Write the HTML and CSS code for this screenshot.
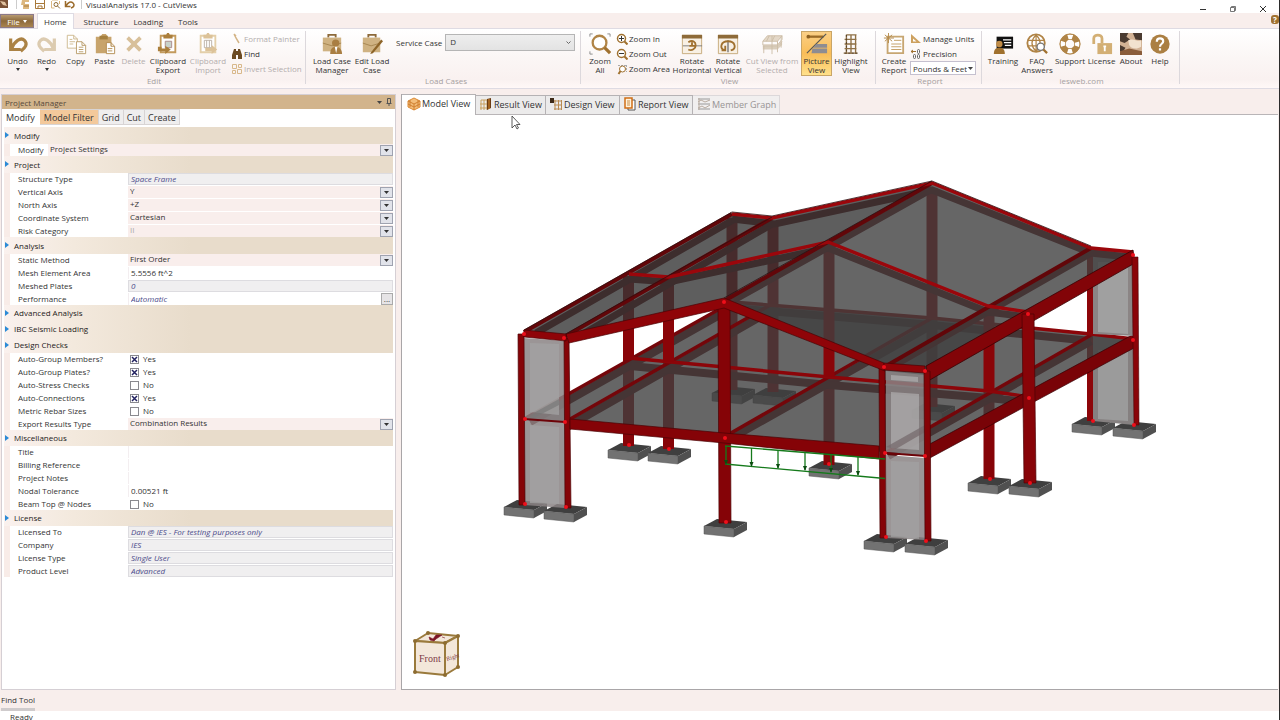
FILE: index.html
```html
<!DOCTYPE html>
<html lang="en">
<head>
<meta charset="utf-8">
<title>VisualAnalysis 17.0 - CutViews</title>
<link rel="stylesheet" href="styles.css">
</head>
<body>
<div class="app">
<header class="titlebar">
  <svg class="quick" viewBox="0 0 76 10" aria-hidden="true">
    <path d="M0 0h8v8H0z" fill="#7a5136"/><path d="M0 1l5 1 2 4-4-1z" fill="#e0c2a0"/><path d="M16.500 0v9" stroke="#ccc"/>
    <path d="M22 0h7v2h-4v2h4v5h-6V5h-2z" fill="#dcb77f"/><path d="M24 6h5" stroke="#a8793a"/>
    <path d="M35.500 0v8.500h9V0M35 3.500h9M38 8V6h4v2" stroke="#a8793a" fill="none"/>
    <path d="M52 0h6M51.500 1v7h3M59.500 1v3" stroke="#dcb77f" fill="none"/><circle cx="56" cy="4.500" r="2" stroke="#8f6a33" fill="none"/><path d="M57.500 6l2.500 2.500" stroke="#8f6a33"/>
    <path d="M65.500 1v5.500h5M66 6c2-4 5-5 7-3s1 4-2 5" stroke="#9a6a2a" stroke-width="1.500" fill="none"/>
  </svg>
  <span class="title">VisualAnalysis 17.0 - CutViews</span>
  <div class="winbtns">
    <button aria-label="Minimize"><svg viewBox="0 0 8 8"><path d="M1 4.500h6" stroke="#333"/></svg></button>
    <button aria-label="Restore"><svg viewBox="0 0 8 8"><path d="M1.500 2.500h4v4h-4zM2.500 2.500v-1h4v4h-1" stroke="#555" stroke-width=".8" fill="none"/></svg></button>
    <button aria-label="Close"><svg viewBox="0 0 8 8"><path d="M1 1l6 6M7 1L1 7" stroke="#333"/></svg></button>
  </div>
</header>

<nav class="menu">
  <button class="file">File <span class="tri"></span></button>
  <button class="mtab on">Home</button>
  <button class="mtab">Structure</button>
  <button class="mtab">Loading</button>
  <button class="mtab">Tools</button>
  <button class="minihelp" aria-label="Help">?</button>
</nav>

<section class="ribbon">
  <div class="group g-edit">
    <div class="tools">
      <button class="big w29"><svg viewBox="0 0 24 24"><path d="M4 6v12h11M5 17C8 9 15 4 19 8s1 8-4 12" fill="none" stroke="#ab8244" stroke-width="3.500"/></svg><span>Undo</span><i class="tri"></i></button>
      <button class="big w29"><svg viewBox="0 0 24 24"><path d="M20 6v12H9M19 17C16 9 9 4 5 8s-1 8 4 12" fill="none" stroke="#dccbb0" stroke-width="3.500"/></svg><span>Redo</span><i class="tri"></i></button>
      <button class="big w29"><svg viewBox="0 0 24 24"><path d="M2.500 2.500h7l4 4v10h-11zM9.500 2.500v4h4M5 7h3M5 9.500h6M5 12h4" fill="#fff" stroke="#cdb88c"/><path d="M12.500 9.500h6l4 4v9h-10zM18.500 9.500v4h4M15 15.500h5M15 18h5M15 20.500h5" fill="#fff" stroke="#b89a68"/></svg><span>Copy</span></button>
      <button class="big w29"><svg viewBox="0 0 24 24"><path d="M2 4h5l2-3h4l2 3h4v18H2z" fill="#c8a46c"/><path d="M6 3h9v4H6z" fill="#a5803f"/><path d="M13.500 10.500h5l4 4v8h-9zM18.500 10.500v4h4M15 17h5M15 19.500h5" fill="#fff" stroke="#b28b50"/></svg><span>Paste</span></button>
      <button class="big w29" disabled><svg viewBox="0 0 24 24"><path d="M5 5l14 14M19 5L5 19" stroke="#d8c09a" stroke-width="4"/></svg><span>Delete</span></button>
      <button class="big w40"><svg viewBox="0 0 24 24"><path d="M4 3h16v18H4z" fill="#fff" stroke="#c39a5c" stroke-width="2"/><path d="M7 2h3l1-2h2l1 2h3v4H7z" fill="#ab7f3c"/><path d="M9 9h7v7H9z" fill="#c8d2ca" stroke="#a88"/><path d="M1 15v5h8v3l6-5-6-4v3H5v-2z" fill="#ab7f3c"/></svg><span>Clipboard<br>Export</span></button>
      <button class="big w40" disabled><svg viewBox="0 0 24 24"><path d="M4 3h16v18H4z" fill="#fff" stroke="#e4cfa9" stroke-width="2"/><path d="M7 2h3l1-2h2l1 2h3v4H7z" fill="#dcc298"/><path d="M8 8h8v8H8zM10.500 8v8M13.500 8v8" fill="none" stroke="#b9afa5"/><path d="M9 16h7v-3l6 5-6 5v-3H9z" fill="#dcc298"/></svg><span>Clipboard<br>Import</span></button>
      <div class="stack s-edit">
        <button class="small" disabled><svg viewBox="0 0 12 12"><path d="M3 1l2 4 3 5M3 1l2 2" stroke="#d3b486" fill="none" stroke-width="1.500"/></svg>Format Painter</button>
        <button class="small"><svg viewBox="0 0 12 12"><path d="M3 1h2v2h2V1h2l2 6v4H7V7H5v4H1V7z" fill="#6b4a22"/></svg>Find</button>
        <button class="small" disabled><svg viewBox="0 0 12 12"><path d="M1.500 1.500h4v4h-4zM6.500 6.500h4v4h-4zM7.500 1.500h3v3h-3zM1.500 7.500h3v3h-3z" stroke="#d8b88a" fill="none"/></svg>Invert Selection</button>
      </div>
    </div>
    <div class="gname">Edit</div>
  </div>

  <div class="group g-load">
    <div class="tools">
      <button class="big w40"><svg viewBox="0 0 24 24"><path d="M8 5V2h8v3" fill="none" stroke="#8d6a3a" stroke-width="2"/><path d="M2 5h20v15H2z" fill="#cfb282"/><path d="M2 11l10 3 10-3" stroke="#a58450" fill="none"/><circle cx="16" cy="11" r="4" fill="#a97e42"/><path d="M10 23c0-5 2-8 6-8s7 3 7 8z" fill="#a97e42"/><path d="M15 15h3l-1.500 7z" fill="#fff"/></svg><span>Load Case<br>Manager</span></button>
      <button class="big w40"><svg viewBox="0 0 24 24"><path d="M8 5V2h8v3" fill="none" stroke="#8d6a3a" stroke-width="2"/><path d="M2 5h19v16H2z" fill="#cfb282"/><path d="M2 11l9 3 10-3" stroke="#a58450" fill="none"/><path d="M11 21l-1 2 3-1L24 9l-2-2z" fill="#8d6428"/></svg><span>Edit Load<br>Case</span></button>
      <div class="case"><label for="svc">Service Case</label>
      <select id="svc"><option>D</option></select></div>
    </div>
    <div class="gname">Load Cases</div>
  </div>

  <div class="group g-view">
    <div class="tools">
      <button class="big w32"><svg viewBox="0 0 24 24"><path d="M1 4V1h3M20 1h3v3M1 20v3h3" fill="none" stroke="#888"/><circle cx="11.500" cy="10.500" r="7.500" fill="#fff" stroke="#b08446" stroke-width="2.500"/><path d="M17 16l6 6" stroke="#a0712f" stroke-width="3.500"/></svg><span>Zoom<br>All</span></button>
      <div class="stack s-zoom">
        <button class="small"><svg viewBox="0 0 12 12"><circle cx="5.500" cy="5.500" r="4" fill="#fff" stroke="#a0712f" stroke-width="1.500"/><path d="M3 5.500h5M5.500 3v5" stroke="#333"/><path d="M8.500 8.500l3 3" stroke="#a0712f" stroke-width="2"/></svg>Zoom In</button>
        <button class="small"><svg viewBox="0 0 12 12"><circle cx="5.500" cy="5.500" r="4" fill="#fff" stroke="#a0712f" stroke-width="1.500"/><path d="M3 5.500h5" stroke="#333"/><path d="M8.500 8.500l3 3" stroke="#a0712f" stroke-width="2"/></svg>Zoom Out</button>
        <button class="small"><svg viewBox="0 0 12 12"><path d="M2 2.500h9M10.500 2v7" stroke="#aaa" stroke-dasharray="2 1"/><circle cx="6.500" cy="6" r="3" fill="#fff" stroke="#a0712f"/><path d="M4.500 8l-2 3" stroke="#a0712f" stroke-width="2"/></svg>Zoom Area</button>
      </div>
      <button class="big w42"><svg viewBox="0 0 24 24"><path d="M1.500 2.500h21v20h-21z" fill="#f8f0e4" stroke="#c5a878"/><path d="M1 2h22v4H1z" fill="#8d6a38"/><path d="M2 14h7M15 14h8" stroke="#777"/><path d="M8 10c5-3 8 0 8 3.500S12 20 8 18M9 14h6M12 10v3" fill="none" stroke="#a0712f" stroke-width="2"/></svg><span>Rotate<br>Horizontal</span></button>
      <button class="big w30"><svg viewBox="0 0 24 24"><path d="M1.500 2.500h21v20h-21z" fill="#f8f0e4" stroke="#c5a878"/><path d="M1 2h22v4H1z" fill="#8d6a38"/><path d="M12 8v13" stroke="#777" stroke-width="1.500"/><path d="M9 19c-7-2-5-10 3-10s10 8 3 10M9 14v5H5" fill="none" stroke="#a0712f" stroke-width="2"/></svg><span>Rotate<br>Vertical</span></button>
      <button class="big w58" disabled><svg viewBox="0 0 24 24"><path d="M2 9l5-6h16l-5 6z" fill="#e4d8c8"/><path d="M2 14h16l5-5v4l-5 5H2z" fill="#d9cdbb"/><path d="M2 9l5-6h16l-5 6zM2 9v4h16V9M18 13l5-6V3M2 14h16l5-5M12 3v20M18 9v12M3 14v8M9 3l-3 6M15 3l-3 6M22 4v12" fill="none" stroke="#cdbda6"/></svg><span>Cut View from<br>Selected</span></button>
      <button class="big w31 active"><svg viewBox="0 0 24 24"><path d="M2 4h17" stroke="#9a6a26" stroke-width="2.500"/><circle cx="2.500" cy="4" r="2" fill="#8d6020"/><path d="M1 22L22 1" stroke="#555" stroke-width="1.200"/><path d="M11 12h12v4H8zM7 17h16v5H6z" fill="#8e8c92"/></svg><span>Picture<br>View</span></button>
      <button class="big w38"><svg viewBox="0 0 24 24"><path d="M7 2v21M12 2v21M17 2v21M5 7h13M5 12h13M5 17h13M4 22h15M7 2h11" fill="none" stroke="#8f7146" stroke-width="1.500"/><path d="M5 22h14M7 2v20" stroke="#4b3a26" stroke-dasharray="2 2"/></svg><span>Highlight<br>View</span></button>
    </div>
    <div class="gname">View</div>
  </div>

  <div class="group g-report">
    <div class="tools">
      <button class="big w30"><svg viewBox="0 0 24 24"><path d="M5 4h17v18H5z" fill="#fff" stroke="#c7a671" stroke-width="2"/><path d="M12 8h8M9 12h11M9 15h11M9 18h11" stroke="#c09a5e"/><path d="M6 0v11M1 5.500h11M2 2l8 7M10 2L2 9" stroke="#b58b4b"/></svg><span>Create<br>Report</span></button>
      <div class="stack s-report">
        <button class="small"><svg viewBox="0 0 12 12"><path d="M1 1v9h10zM3 5.500L6.500 8.500H3z" fill="#cda15f" fill-rule="evenodd"/></svg>Manage Units</button>
        <button class="small"><svg viewBox="0 0 12 12"><path d="M1 3.500h5M3 2L1 3.500 3 5" stroke="#a0712f" fill="none"/><rect x="7.500" y="1.500" width="2" height="4" rx="1" fill="none" stroke="#666"/><rect x="3.500" y="6.500" width="2" height="4" rx="1" fill="none" stroke="#666"/><rect x="7.500" y="6.500" width="2" height="4" rx="1" fill="none" stroke="#666"/></svg>Precision</button>
        <select class="units" aria-label="Units"><option>Pounds &amp; Feet</option></select>
      </div>
    </div>
    <div class="gname">Report</div>
  </div>

  <div class="group g-web">
    <div class="tools">
      <button class="big w38"><svg viewBox="0 0 24 24"><path d="M5 4h18v13H5z" fill="#111"/><path d="M12 7.500h9M13 10.500h8M14 13.500h7" stroke="#fff" stroke-width="1.500"/><circle cx="8" cy="12" r="3.500" fill="#c08c48"/><path d="M2 23c0-5 2-7 6-7s6 2 6 7z" fill="#a0712f"/></svg><span>Training</span></button>
      <button class="big w30"><svg viewBox="0 0 24 24"><circle cx="11" cy="11" r="9.500" fill="#fff" stroke="#b08446" stroke-width="2"/><path d="M2 8h18M2 14h18M11 2c-6 6-6 12 0 18M11 2c6 6 6 12 0 18M11 2v18" fill="none" stroke="#b08446" stroke-width="1.300"/><circle cx="16" cy="15" r="4" fill="#fff" stroke="#777" stroke-width="1.500"/><path d="M19 18l4 4" stroke="#a0712f" stroke-width="2.500"/></svg><span>FAQ<br>Answers</span></button>
      <button class="big w36"><svg viewBox="0 0 24 24"><circle cx="12" cy="12" r="8" fill="none" stroke="#b08446" stroke-width="6.500"/><circle cx="12" cy="12" r="8" fill="none" stroke="#fff" stroke-width="5" stroke-dasharray="5 7.560" stroke-dashoffset="2.500"/><circle cx="12" cy="12" r="11" fill="none" stroke="#b08446"/></svg><span>Support</span></button>
      <button class="big w27"><svg viewBox="0 0 24 24"><path d="M3 12V6c0-5 9-5 9 0v5" fill="none" stroke="#d3af74" stroke-width="3"/><path d="M7 11h16v12H7z" fill="#d3af74"/><path d="M15 14v6M13.500 14.500h3" stroke="#fff" stroke-width="2"/></svg><span>License</span></button>
      <button class="big w32"><svg viewBox="0 0 24 24"><path d="M0 0h24v24H0z" fill="#d2b295"/><path d="M0 0h9l-2 4 4 3-6 4-5-2zM14 0h10v8l-7-1zM0 13l6 3-3 5-3-1z" fill="#4a3a30"/><path d="M9 8c5-3 11 2 14 0v7c-6 4-12 1-13-2z" fill="#f2e2cf"/><path d="M0 20l10-3 14 3v4H0z" fill="#8a5c3a"/></svg><span>About</span></button>
      <button class="big w26"><svg viewBox="0 0 24 24"><circle cx="12" cy="12" r="10.500" fill="#ab7f42"/><path d="M8.500 9.500c0-5 7-4.500 7-.5 0 3-3.500 2.500-3.500 6M12 16.500v2.500" fill="none" stroke="#fff" stroke-width="2.400"/></svg><span>Help</span></button>
    </div>
    <div class="gname">iesweb.com</div>
  </div>
</section>

<main class="work">
<aside class="manager">
  <div class="mhead"><span>Project Manager</span><svg viewBox="0 0 18 8"><path d="M2 3h5L4.500 6z" fill="#444"/><path d="M11.500 5.500h5M12.500 5V.500h3V5M14 5.500V8" stroke="#555" fill="none"/></svg></div>
  <div class="mtabs" role="tablist">
    <button role="tab" class="pt on">Modify</button><button role="tab" class="pt filter">Model Filter</button><button role="tab" class="pt">Grid</button><button role="tab" class="pt">Cut</button><button role="tab" class="pt">Create</button>
  </div>
  <div class="props">
    <h3>Modify</h3>
    <div class="rows">
      <div class="row short"><label for="p1">Modify</label><select id="p1"><option>Project Settings</option></select></div>
    </div>
    <h3>Project</h3>
    <div class="rows">
      <div class="row"><label for="p2">Structure Type</label><input id="p2" class="ro" readonly value="Space Frame"></div>
      <div class="row"><label for="p3">Vertical Axis</label><select id="p3"><option>Y</option></select></div>
      <div class="row"><label for="p4">North Axis</label><select id="p4"><option>+Z</option></select></div>
      <div class="row"><label for="p5">Coordinate System</label><select id="p5"><option>Cartesian</option></select></div>
      <div class="row"><label for="p6">Risk Category</label><select id="p6" class="dim"><option>II</option></select></div>
    </div>
    <h3>Analysis</h3>
    <div class="rows">
      <div class="row"><label for="p7">Static Method</label><select id="p7"><option>First Order</option></select></div>
      <div class="row"><label for="p8">Mesh Element Area</label><input id="p8" value="5.5556 ft^2"></div>
      <div class="row"><label for="p9">Meshed Plates</label><input id="p9" class="ro" readonly value="0"></div>
      <div class="row"><label for="p10">Performance</label><input id="p10" class="auto" value="Automatic"><button class="dots" aria-label="Edit performance">...</button></div>
    </div>
    <h3 class="tight">Advanced Analysis</h3>
    <h3 class="tight">IBC Seismic Loading</h3>
    <h3 class="tight">Design Checks</h3>
    <div class="rows">
      <div class="row"><label for="c1">Auto-Group Members?</label><input id="c1" type="checkbox" checked><span>Yes</span></div>
      <div class="row"><label for="c2">Auto-Group Plates?</label><input id="c2" type="checkbox" checked><span>Yes</span></div>
      <div class="row"><label for="c3">Auto-Stress Checks</label><input id="c3" type="checkbox"><span>No</span></div>
      <div class="row"><label for="c4">Auto-Connections</label><input id="c4" type="checkbox" checked><span>Yes</span></div>
      <div class="row"><label for="c5">Metric Rebar Sizes</label><input id="c5" type="checkbox"><span>No</span></div>
      <div class="row"><label for="p11">Export Results Type</label><select id="p11"><option>Combination Results</option></select></div>
    </div>
    <h3 class="tight">Miscellaneous</h3>
    <div class="rows">
      <div class="row"><label for="p12">Title</label><input id="p12"></div>
      <div class="row"><label for="p13">Billing Reference</label><input id="p13"></div>
      <div class="row"><label for="p14">Project Notes</label><input id="p14"></div>
      <div class="row"><label for="p15">Nodal Tolerance</label><input id="p15" value="0.00521 ft"></div>
      <div class="row"><label for="c6">Beam Top @ Nodes</label><input id="c6" type="checkbox"><span>No</span></div>
    </div>
    <h3 class="tight">License</h3>
    <div class="rows">
      <div class="row"><label for="p16">Licensed To</label><input id="p16" class="ro" readonly value="Dan @ IES - For testing purposes only"></div>
      <div class="row"><label for="p17">Company</label><input id="p17" class="ro" readonly value="IES"></div>
      <div class="row"><label for="p18">License Type</label><input id="p18" class="ro" readonly value="Single User"></div>
      <div class="row"><label for="p19">Product Level</label><input id="p19" class="ro" readonly value="Advanced"></div>
    </div>
  </div>
</aside>

<section class="views">
  <div class="vtabs" role="tablist">
    <button role="tab" class="vt v1 on"><svg viewBox="0 0 14 14"><path d="M7 1l6 3v6l-6 3-6-3V4z" fill="#f3bd7a" stroke="#dc8a34"/><path d="M1 4l6 3 6-3M7 7v6M3 3v7M11 3v7M1 7l6 3 6-3" stroke="#d08030" fill="none"/></svg>Model View</button>
    <button role="tab" class="vt v2"><svg viewBox="0 0 14 14"><path d="M2 3h6v10M2 3v10M5 3v10M1 7h8M1 11h8" stroke="#c9a061" fill="none"/><path d="M8 2l4-1v10l-4 2z" fill="#6b3c14"/><path d="M10 2v10" stroke="#e08b2b"/></svg>Result View</button>
    <button role="tab" class="vt v3"><svg viewBox="0 0 14 14"><path d="M5 4h8M5 8h8M5 12h8M6 3v10M9.500 3v10M12.500 3v10" stroke="#b98a50" fill="none"/><path d="M1 1h4v5H1z" fill="#3d2a18"/></svg>Design View</button>
    <button role="tab" class="vt v4"><svg viewBox="0 0 14 14"><path d="M5 3h7v10H5z" fill="#fff" stroke="#555"/><path d="M2 1h7v10H2z" fill="#fff3dc" stroke="#cf6d16" stroke-width="1.500"/><path d="M4 4h3M4 6h3M4 8h3" stroke="#c98b45"/></svg>Report View</button>
    <button role="tab" class="vt v5" disabled><svg viewBox="0 0 14 14"><path d="M1 2h12M1 7h12M1 12h12" stroke="#999"/><path d="M1 5l3-2 4 2 5-2M1 11l4-2 3 2 5-3M2 1v12" stroke="#b9aca0" fill="none"/></svg>Member Graph</button>
  </div>
  <svg class="model" viewBox="402 115 876 574" preserveAspectRatio="xMidYMid meet" role="img" aria-label="Steel frame model">
    <defs>
      <g id="pad"><path d="M-20 3L-7 -4L23 -1L10 6Z" fill="#3f3f3f"/><path d="M-20 3L10 6V14L-20 11Z" fill="#727272" stroke="#555" stroke-width=".5"/><path d="M10 6L23 -1V7L10 14Z" fill="#505050"/></g>
      <circle id="nd" r="2" fill="#ee0f1a"/>
      <g id="arr"><path d="M0 0V18" stroke="#157a1b" stroke-width="1.300"/><path d="M-2 14h4l-2 5z" fill="#0b4d10"/></g>
    </defs>

    <!-- pads -->
    <use href="#pad" x="732" y="390"/><use href="#pad" x="773" y="392"/><use href="#pad" x="932" y="407"/>
    <use href="#pad" x="1092" y="421"/><use href="#pad" x="1133" y="425"/>
    <use href="#pad" x="628" y="447"/><use href="#pad" x="668" y="450"/><use href="#pad" x="829" y="465"/><use href="#pad" x="988" y="480"/><use href="#pad" x="1029" y="483"/>

    <!-- lower columns behind the floor -->
    <g stroke="#860408" stroke-width="11">
      <path d="M732 302V390M773 304V392M932 318V407M628.500 358V446M668.500 362V449M829 377V465M989 391V479"/>
    </g>
    <path d="M1093 334L1134 340V425L1093 421Z" fill="#858080"/><path d="M1098 350L1128 350V421L1098 419Z" fill="#9b9b9b"/>
    <path d="M1087 334H1093V421H1087Z" fill="#8d0509"/>
    <g stroke="#5a0a0d" stroke-width="8" fill="none">
      <path d="M530 422L732 308M567 427L774 309M728 440L932 325M888 456L1091 341"/>
      <path d="M732 308L932 325L1091 341M630 366L829 385L989 398L1026 402"/>
    </g>
    <path class="glass" d="M524 419L732 302L932 318L1091 334L1134 340L925 456L724 437Z"/>
    <g stroke="#74060a" stroke-width="3.500" fill="none">
      <path d="M524 419L732 302M565 422L772 304M724 437L932 318M885 453L1091 335"/>
      <path d="M732 302L932 318L1091 334L1134 339M629 358L829 377L989 391L1029 397" stroke="#8c0509"/>
    </g>
    <path d="M928 445L1134 334V348L928 459Z" fill="#790307" stroke="#370204" stroke-width=".7"/>

    <!-- upper columns under the roof -->
    <g stroke="#8a0408" stroke-width="11">
      <path d="M732 218V302M773 222V304M932 188V318M628.500 276V360M668.500 279V362M829 246V377M989 308V391"/>
    </g>
    <path d="M1093 247L1134 256V336L1093 334Z" fill="#8b8585"/><path d="M1098 262L1128 262V334L1098 332Z" fill="#a0a0a0"/>
    <path d="M1087 250H1093V334H1087Z" fill="#8d0509"/>
    <path d="M886 371L925 375V455L886 452Z" class="wall"/>

    <!-- roof framing seen through the panels -->
    <g stroke="#5a0a0d" stroke-width="7" fill="none">
      <path d="M536 333L733 220M576 338L774 223M734 300L932 189M893 366L1093 252"/>
      <path d="M732 219L775 224L932 190L1091 253L1128 257M629 279L669 282L828 248L988 312L1027 317"/>
    </g>
    <path class="glass left" d="M524 332L732 213L772 218L932 182L724 300L564 337Z"/>
    <path class="glass" d="M724 300L932 182L1091 247L1133 252L925 369L885 365Z"/>
    <g stroke="#620609" stroke-width="4" fill="none">
      <path d="M524 332L732 214M564 337L772 218M724 301L932 183M886 366L1091 248"/>
    </g>
    <g stroke="#9b060b" stroke-width="3.500" fill="none">
      <path d="M732 214L772 218L932 183L1091 248L1133 252M629 274L669 277L828 242L988 306L1028 312"/>
    </g>
    <g stroke="#2d1012" stroke-width=".8" fill="none"><path d="M524 330L732 212L772 216L932 181L1091 246M564 335L772 217M724 298L932 181"/></g>
    <path d="M926 366L1133 250L1135 263L928 381Z" fill="#820408" stroke="#390204" stroke-width=".8"/>

    <!-- right side columns -->
    <path d="M1132 257H1138L1139 425H1134Z" fill="#8a0408" stroke="#4a0305" stroke-width=".6"/>
    <path d="M1022 314H1034L1036 483H1024Z" fill="#880408" stroke="#4a0305" stroke-width=".7"/>

    <!-- front pads, walls and columns -->
    <use href="#pad" x="524" y="504"/><use href="#pad" x="564" y="508"/><use href="#pad" x="724" y="523"/><use href="#pad" x="884" y="538"/><use href="#pad" x="925" y="541"/>
    <path class="wall" d="M524 338L565 341V508L524 505Z"/>
    <path d="M530 343L559 344V415L530 412ZM530 425L559 427V504L530 503Z" fill="#a3a3a3" opacity=".75"/>
    <path d="M530 415L559 399V405L530 420Z" fill="#777" opacity=".7"/>
    <path class="wall" d="M886 455L925 458V540L886 538Z"/>
    <path d="M891 461L919 462V539L891 537Z" fill="#a3a3a3" opacity=".7"/>
    <path d="M891 375L918 377V382L891 380ZM891 392L919 394V450L891 448Z" fill="#b8b8b8" opacity=".6"/>
    <path d="M886 447L925 425V432L896 449Z" fill="#766b6d" opacity=".75"/>
    <g fill="#850307" stroke="#4a0305" stroke-width=".7">
      <path d="M518 334H524L525 505H519ZM564 338H569L571 508H565ZM718 305H730L731 523H719ZM879 366H885L886 538H880ZM924 371H930L931 541H925Z"/>
      <path d="M570 419L724 433L879 446V459L724 443L570 429Z"/>
      <path d="M566 334L724 298L884 363L885 371L724 308L569 343Z" fill="#8f0408"/>
      <path d="M524 330L566 334V341L524 337ZM884 363L925 366V373L884 370Z" fill="#8f0408"/>
    </g>
    <path d="M524 419L565 422M885 453L925 456" stroke="#6d0308" stroke-width="2"/>

    <!-- beam load -->
    <path d="M725 446L885 459M725 464L885 478.500" stroke="#157a1b" stroke-width="1.300"/>
    <use href="#arr" x="726" y="446"/><use href="#arr" x="751.500" y="448"/><use href="#arr" x="778" y="450"/><use href="#arr" x="805" y="452"/><use href="#arr" x="831" y="454"/><use href="#arr" x="858" y="457"/>
    <g><use href="#nd" x="524" y="334"/><use href="#nd" x="564" y="338"/><use href="#nd" x="724" y="302"/><use href="#nd" x="884" y="367"/><use href="#nd" x="925" y="371"/><use href="#nd" x="1028" y="314"/><use href="#nd" x="1133" y="255"/><use href="#nd" x="1133" y="340"/><use href="#nd" x="1029" y="398"/><use href="#nd" x="525" y="419"/><use href="#nd" x="565" y="422"/><use href="#nd" x="725" y="438"/><use href="#nd" x="885" y="453"/><use href="#nd" x="925" y="456"/>
    <use href="#nd" x="525" y="504"/><use href="#nd" x="566" y="507"/><use href="#nd" x="726" y="522"/><use href="#nd" x="886" y="537"/><use href="#nd" x="926" y="541"/><use href="#nd" x="629" y="445"/><use href="#nd" x="669" y="449"/><use href="#nd" x="829" y="464"/><use href="#nd" x="990" y="479"/><use href="#nd" x="1030" y="483"/><use href="#nd" x="1093" y="421"/><use href="#nd" x="1134" y="425"/></g>

    <!-- orientation cube -->
    <g fill="#f3e7da" stroke="#9a7a3c" stroke-width="2" stroke-linejoin="round"><path d="M415 641L428 633L458 636L445 643Z"/><path d="M415 641L445 643V675L415 672Z"/><path d="M445 643L458 636V667L445 675Z"/></g>
    <g fill="#8d6c31"><circle cx="415" cy="641" r="2"/><circle cx="445" cy="643" r="2"/><circle cx="458" cy="636" r="2"/><circle cx="428" cy="633" r="2"/><circle cx="415" cy="672" r="2"/><circle cx="445" cy="675" r="2"/><circle cx="458" cy="667" r="2"/></g>
    <path d="M429 637l4 2 3-4h6l-6 4-2 2-4-1zM442 637l3 1" fill="#7b1526" stroke="#7b1526" stroke-width=".6"/>
    <text class="cube" x="419" y="662">Front</text><text class="cube side" transform="translate(447 661) rotate(-18)">Right</text>

    <path d="M512 116v12l3-3 2 4 1.500-1-2-3.500h3.500z" fill="#fff" stroke="#333" stroke-width=".8"/>
  </svg>
</section>
</main>

<footer class="find"><button>Find Tool</button></footer>
<div class="status">Ready</div>
</div>
</body>
</html>
```
FILE: styles.css
```css
* { box-sizing: border-box; }
body { margin: 0; font: 8px/9px "Open Sans", "Noto Sans", sans-serif; color: #333; }
button, select, input { font: inherit; color: inherit; margin: 0; padding: 0; border: 0; background: none; border-radius: 0; }
svg { display: block; flex: none; }
.app { height: 100vh; display: flex; flex-direction: column; overflow: hidden; background: #f8eeec; border-right: 1px solid #2b2b2b; }

.titlebar { height: 13px; flex: none; display: flex; align-items: flex-start; background: #fff; }
.quick { width: 76px; height: 10px; }
.title { margin-left: 5px; padding-left: 4px; border-left: 1px solid #ccc; line-height: 9px; }
.winbtns { margin-left: auto; display: flex; padding: 5px 12px 0 0; gap: 22px; }
.winbtns svg { width: 8px; height: 8px; }

.menu { height: 16px; flex: none; display: flex; align-items: stretch; border-bottom: 1px solid #dedbe3; }
.file { width: 34px; margin: 1px 3px 0 0; color: #fff; background: linear-gradient(#b79a70, #8d6a3b 50%, #a98450); border: 1px solid #8b7a8a; display: flex; align-items: center; justify-content: center; gap: 3px; }
.tri { border: 2px solid transparent; border-top: 3px solid currentColor; border-bottom: 0; width: 0; height: 0; }
.mtab { padding: 0 6px; margin-right: 1px; border: 1px solid transparent; border-bottom: 0; }
.mtab.on { background: #fff; border-color: #dedbe3; margin: 0 3px -1px 0; }
.minihelp { margin: 2px 0 4px auto; width: 8px; background: #a0712f; color: #fff; border-radius: 3px; font-weight: 700; }

.ribbon { height: 60px; flex: none; display: flex; background: linear-gradient(#fff, #fbf6f5 50%, #f9f1f0 85%, #fff8f7); border-bottom: 1px solid #dedbe3; }
.group { display: flex; flex-direction: column; border-right: 1px solid #dcd8dc; margin: 2px 0 4px; }
.tools { display: flex; align-items: flex-start; height: 45px; }
.gname { text-align: center; color: #a5a0a0; line-height: 10px; }
.g-edit { width: 306px; padding-left: 3px; }
.g-load { width: 275px; padding-left: 6px; }
.g-view { width: 295px; padding-left: 3px; }
.g-report { width: 106px; padding-left: 3px; }
.g-web { width: 198px; padding-left: 2px; }
.big { display: flex; flex-direction: column; align-items: center; height: 45px; padding-top: 2px; white-space: nowrap; line-height: 9px; border: 1px solid transparent; border-width: 0 1px; }
.big svg { width: 22px; height: 22px; margin-bottom: 1px; }
.big .tri { margin-top: 3px; }
.big:disabled, .small:disabled { color: #b3adad; }
.big.active { background: linear-gradient(#fbcf85, #f9bd58 50%, #ffe08a); border: 1px solid #c9a566; padding-top: 1px; }
.w26 { width: 26px; } .w27 { width: 27px; } .w29 { width: 29px; } .w30 { width: 30px; } .w31 { width: 31px; } .w32 { width: 32px; } .w36 { width: 36px; }
.w38 { width: 38px; } .w40 { width: 40px; } .w42 { width: 42px; } .w58 { width: 58px; }
.stack { display: flex; flex-direction: column; }
.small { display: flex; align-items: center; height: 15px; gap: 1px; white-space: nowrap; }
.small svg { width: 12px; height: 12px; }
.s-edit { padding-left: 3px; }
.s-zoom { width: 55px; }
.s-report { width: 66px; margin-left: 1px; }
.units { height: 14px; appearance: none; background: #fff url("data:image/svg+xml,%3Csvg xmlns='http://www.w3.org/2000/svg' width='5' height='3'%3E%3Cpath d='M0 0h5L2.500 3z' fill='%23444'/%3E%3C/svg%3E") no-repeat right 2px center; border: 1px solid #c5c0cf; padding: 0 8px 0 2px; }
.case { display: flex; align-items: center; gap: 3px; flex: 1; margin: 3px 5px 0 4px; }
.case select { flex: 1; height: 17px; appearance: none; padding: 0 4px 2px; border: 1px solid #b5b5b5; background-image: url("data:image/svg+xml,%3Csvg xmlns='http://www.w3.org/2000/svg' width='5' height='4'%3E%3Cpath d='M.5 .5l2 2 2-2' fill='none' stroke='%23666'/%3E%3C/svg%3E"), linear-gradient(#eee, #e3e3e3); background-repeat: no-repeat; background-position: right 3px center, 0 0; }

.work { flex: 1; min-height: 0; display: flex; gap: 5px; padding: 5px 0 0 1px; }
.manager { width: 395px; flex: none; background: #fff; border: 1px solid #d5cfd4; display: flex; flex-direction: column; }
.mhead { height: 14px; flex: none; display: flex; align-items: center; justify-content: space-between; background: #d2b48c; padding: 0 2px 0 3px; color: #57493a; }
.mhead svg { width: 18px; height: 8px; }
.mtabs { display: flex; height: 16px; flex: none; font-size: 9px; margin-bottom: 2px; }
.pt { padding: 0 3px; background: #efeeee; border: 1px solid #d8d4d4; border-left: 0; }
.pt.on { background: #fff; border-color: transparent; padding: 0 4px; }
.pt.filter { background: #f3c99b; padding: 0 4px; }
.props { margin: 0 2px; background: linear-gradient(90deg, #f8ece8 6px, #fff 6px); }
.props h3 { margin: 0; height: 17px; line-height: 17px; font-size: 8px; font-weight: 500; color: #1d1a1a; padding-left: 10px; background: linear-gradient(90deg, #faf1ee, #f3e9dd 18%, #e8dccb 48%); position: relative; }
.props h3.tight { height: 16px; line-height: 16px; }
.props h3::before { content: ""; position: absolute; left: 1px; top: 5px; border: 3px solid transparent; border-left: 4px solid #2b8ad6; border-right: 0; }
.rows { display: flex; flex-direction: column; gap: 1px; }
.row { height: 12px; display: flex; align-items: center; padding-left: 14px; white-space: nowrap; }
.row label { width: 110px; flex: none; }
.row.short label { width: 30px; }
.row label, .row span { padding-bottom: 2px; }
.row input:not([type=checkbox]) { flex: 1; min-width: 0; height: 12px; padding: 0 2px 2px; border-left: 1px solid #f3eef0; }
.row .ro { background: #f0eff0; outline: 1px solid #dddce0; outline-offset: -1px; color: #4b4b8a; font-style: italic; }
.row .auto { color: #4b4b8a; font-style: italic; }
.row select { flex: 1; appearance: none; height: 12px; line-height: 10px; padding: 0 16px 2px 2px; background-color: #f9eeec; background-image: url("data:image/svg+xml,%3Csvg xmlns='http://www.w3.org/2000/svg' width='13' height='11'%3E%3Crect x='.5' y='.5' width='12' height='10' fill='%23e1e3ea' stroke='%239fa3b0'/%3E%3Cpath d='M4 4h5L6.500 7z' fill='%23333'/%3E%3C/svg%3E"); background-repeat: no-repeat; background-position: right center; }
.row .dim { color: #aaa; }
.dots { width: 12px; height: 12px; line-height: 8px; background: #e6e4e6; border: 1px solid #aaa; }
.row input[type=checkbox] { appearance: none; width: 9px; height: 9px; margin: 0 4px 0 2px; border: 1px solid #8a8a8f; background: #fff; }
.row input[type=checkbox]:checked { background: #fff url("data:image/svg+xml,%3Csvg xmlns='http://www.w3.org/2000/svg' width='7' height='7'%3E%3Cpath d='M1 1l5 5M6 1L1 6' stroke='%23222260' stroke-width='1.500'/%3E%3C/svg%3E") center no-repeat; }

.views { flex: 1; min-width: 0; display: flex; flex-direction: column; background: #fff; border-left: 1px solid #a9a6a8; border-bottom: 1px solid #a9a6a8; margin-right: 1px; }
.vtabs { display: flex; height: 21px; flex: none; background: #f8eeec; border-bottom: 1px solid #b9b5b7; font-size: 9px; }
.vt { display: flex; align-items: center; gap: 1px; background: #ecebeb; border: 1px solid #b5b2b4; border-left: 0; border-bottom: 0; padding: 0 3px 2px; margin-top: 1px; white-space: nowrap; }
.vt svg { width: 14px; height: 14px; }
.vt.on { background: #fff; margin: 0 0 -1px; padding: 0 5px 3px; }
.vt:disabled { color: #989494; border-color: #dcd8da; background: #f1efef; padding-left: 4px; }
.v1 { width: 74px; } .v2 { width: 70px; } .v3 { width: 74px; } .v4 { width: 73px; } .v5 { width: 87px; }
.model { flex: 1; min-height: 0; width: 100%; }
.glass { fill: #404040; fill-opacity: .8; }
.glass.left { fill: #363636; }
.wall { fill: #8a8284; fill-opacity: .85; }
.cube { font: 10px "Liberation Serif", serif; fill: #7d3a48; }
.cube.side { font-size: 6px; }

.find { height: 21px; flex: none; padding: 4px 1px 0; }
.find button { padding-bottom: 3px; line-height: 11px; border-bottom: 3px solid #cfcbcc; }
.status { height: 9px; flex: none; background: #fff; padding-left: 10px; line-height: 11px; overflow: hidden; }
```
